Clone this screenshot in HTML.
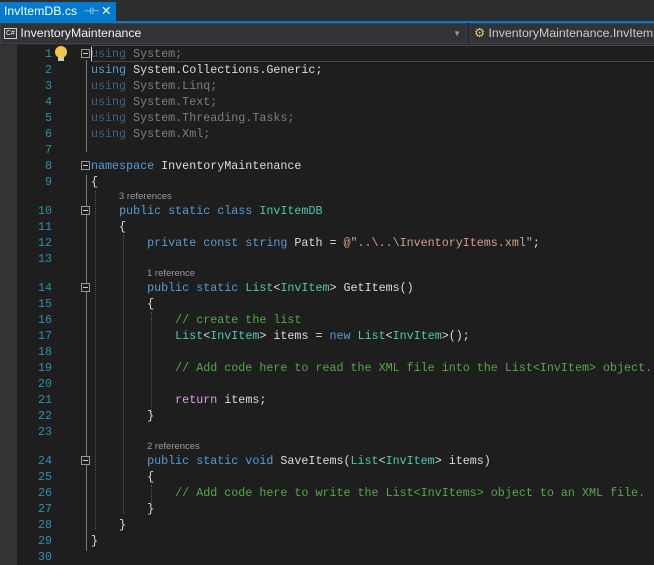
<!DOCTYPE html>
<html><head><style>
*{margin:0;padding:0;box-sizing:border-box}
body{width:654px;height:565px;background:#1e1e1e;overflow:hidden;position:relative;font-family:"Liberation Sans",sans-serif}
.top{position:absolute;left:0;top:0;width:654px;height:45px;background:#2d2d30}
.tab{position:absolute;left:0;top:2px;width:116px;height:20px;background:#007acc;color:#fff;font-size:12.3px;line-height:19px;padding-left:4px;white-space:nowrap;overflow:hidden}
.bl{position:absolute;left:0;top:21px;width:654px;height:2px;background:#007acc}
.dd{position:absolute;top:23px;height:21px;background:#333337;border:1px solid #3f3f46;color:#f1f1f1;font-size:12.3px;line-height:19px;white-space:nowrap;overflow:hidden}
.gut{position:absolute;left:0;top:45px;width:17px;height:520px;background:#333333}
.code{position:absolute;left:0;top:46px;font-family:"Liberation Mono",monospace;font-size:11.7px;color:#dcdcdc}
.r{height:16px;line-height:16px;white-space:pre;position:relative}
.r .n{position:absolute;left:0;width:52px;text-align:right;color:#2b91af}
.r .t{position:absolute;left:91px}
.lens{height:13px;line-height:13px;font-family:"Liberation Sans",sans-serif;font-size:9.5px;color:#999;position:relative;white-space:nowrap}
.lens span{position:absolute;white-space:nowrap}
.k{color:#569cd6}.ty{color:#4ec9b0}.c{color:#57a64a}.s{color:#d69d85}.d{color:#3d6282}.dt{color:#7f7f7f}
.fb{position:absolute;left:81px;width:9px;height:9px;border:1px solid #999;background:#1e1e1e}
.fb:after{content:"";position:absolute;left:1px;top:3px;width:5px;height:1px;background:#ccc}
.vl{position:absolute;width:1px;background:#777}
.dg{position:absolute;width:0;border-left:1px dotted #555}
</style></head><body>
<div class="top"></div>
<div class="tab">InvItemDB.cs<span style="position:absolute;left:84px;font-size:9px">⊣⊢</span><span style="position:absolute;left:101px">✕</span></div>
<div class="bl"></div>
<div class="dd" style="left:0;width:467px;padding-left:3px"><span style="display:inline-block;border:1px solid #ccc;font-size:7px;line-height:9px;padding:0 1px;vertical-align:2px">C#</span> InventoryMaintenance<span style="position:absolute;right:5px;top:0;color:#999;font-size:8px">▼</span></div>
<div class="dd" style="left:470px;width:190px;padding-left:3px;color:#ccc"><span style="color:#e8c07d">⚙</span> InventoryMaintenance.InvItemDB</div>
<div class="gut"></div>
<div style="position:absolute;left:91px;top:45px;width:563px;height:17px;border:1px solid #464646;border-right:none"></div>
<div class="vl" style="left:86px;top:60px;height:92px"></div>
<div class="vl" style="left:86px;top:175px;height:376px"></div>
<div class="dg" style="left:95px;top:191px;height:338px"></div>
<div class="dg" style="left:123px;top:235px;height:278px"></div>
<div class="dg" style="left:151px;top:312px;height:104px"></div>
<div class="dg" style="left:151px;top:485px;height:20px"></div>
<div class="fb" style="left:81px;top:49px"></div>
<div class="fb" style="left:81px;top:161px"></div>
<div class="fb" style="left:81px;top:206px"></div>
<div class="fb" style="left:81px;top:283px"></div>
<div class="fb" style="left:81px;top:456px"></div>
<div style="position:absolute;left:55px;top:46px;width:12px;height:12px;border-radius:50%;background:#f2c744"></div>
<div style="position:absolute;left:58px;top:57px;width:6px;height:4px;background:#ccc"></div>
<div style="position:absolute;left:91px;top:47px;width:1px;height:14px;background:#ddd"></div>
<div class="code">
<div class="r"><span class="n">1</span><span class="t"><span class="d">using</span><span class="dt"> System;</span></span></div>
<div class="r"><span class="n">2</span><span class="t"><span class="k">using</span> System.Collections.Generic;</span></div>
<div class="r"><span class="n">3</span><span class="t"><span class="d">using</span><span class="dt"> System.Linq;</span></span></div>
<div class="r"><span class="n">4</span><span class="t"><span class="d">using</span><span class="dt"> System.Text;</span></span></div>
<div class="r"><span class="n">5</span><span class="t"><span class="d">using</span><span class="dt"> System.Threading.Tasks;</span></span></div>
<div class="r"><span class="n">6</span><span class="t"><span class="d">using</span><span class="dt"> System.Xml;</span></span></div>
<div class="r"><span class="n">7</span></div>
<div class="r"><span class="n">8</span><span class="t"><span class="k">namespace</span> InventoryMaintenance</span></div>
<div class="r"><span class="n">9</span><span class="t">{</span></div>
<div class="lens"><span style="left:119px">3 references</span></div>
<div class="r"><span class="n">10</span><span class="t">    <span class="k">public static class</span> <span class="ty">InvItemDB</span></span></div>
<div class="r"><span class="n">11</span><span class="t">    {</span></div>
<div class="r"><span class="n">12</span><span class="t">        <span class="k">private const string</span> Path = <span class="s">@"..\..\InventoryItems.xml"</span>;</span></div>
<div class="r"><span class="n">13</span></div>
<div class="lens"><span style="left:147px">1 reference</span></div>
<div class="r"><span class="n">14</span><span class="t">        <span class="k">public static</span> <span class="ty">List</span>&lt;<span class="ty">InvItem</span>&gt; GetItems()</span></div>
<div class="r"><span class="n">15</span><span class="t">        {</span></div>
<div class="r"><span class="n">16</span><span class="t">            <span class="c">// create the list</span></span></div>
<div class="r"><span class="n">17</span><span class="t">            <span class="ty">List</span>&lt;<span class="ty">InvItem</span>&gt; items = <span class="k">new</span> <span class="ty">List</span>&lt;<span class="ty">InvItem</span>&gt;();</span></div>
<div class="r"><span class="n">18</span></div>
<div class="r"><span class="n">19</span><span class="t">            <span class="c">// Add code here to read the XML file into the List&lt;InvItem&gt; object.</span></span></div>
<div class="r"><span class="n">20</span></div>
<div class="r"><span class="n">21</span><span class="t">            <span style="color:#d8a0df">return</span> items;</span></div>
<div class="r"><span class="n">22</span><span class="t">        }</span></div>
<div class="r"><span class="n">23</span></div>
<div class="lens"><span style="left:147px">2 references</span></div>
<div class="r"><span class="n">24</span><span class="t">        <span class="k">public static void</span> SaveItems(<span class="ty">List</span>&lt;<span class="ty">InvItem</span>&gt; items)</span></div>
<div class="r"><span class="n">25</span><span class="t">        {</span></div>
<div class="r"><span class="n">26</span><span class="t">            <span class="c">// Add code here to write the List&lt;InvItems&gt; object to an XML file.</span></span></div>
<div class="r"><span class="n">27</span><span class="t">        }</span></div>
<div class="r"><span class="n">28</span><span class="t">    }</span></div>
<div class="r"><span class="n">29</span><span class="t">}</span></div>
<div class="r"><span class="n">30</span></div>
</div>
</body></html>
